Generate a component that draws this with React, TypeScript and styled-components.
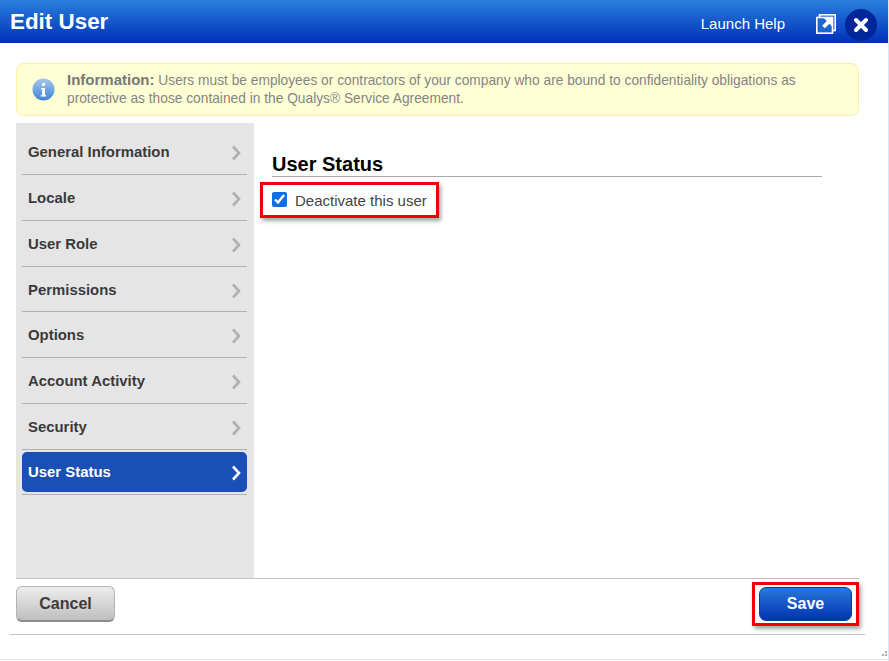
import React from "react";
import styled, { createGlobalStyle } from "styled-components";

const Global = createGlobalStyle`
  html, body { margin: 0; padding: 0; background: #fff; }
  body { font-family: "Liberation Sans", Arial, sans-serif; }
`;

const Page = styled.div`
  width: 889px;
  height: 661px;
  display: flex;
  flex-direction: column;
  overflow: hidden;
  position: relative;
  background: #fff;
  box-sizing: border-box;
  border-right: 1px solid #d6e6f7;
`;

const Header = styled.header`
  height: 43px;
  flex: none;
  box-sizing: border-box;
  display: flex;
  align-items: flex-start;
  padding: 9px 11px 0 10px;
  color: #fff;
  background: linear-gradient(#2a7fdc, #0032ba);
  border-bottom: 1px solid #0030b0;
`;

const Title = styled.h1`
  margin: 0;
  font-size: 22.4px;
  font-weight: 700;
  flex: 1;
`;

const HelpLink = styled.span`
  font-size: 15px;
  margin: 6px 31px 0 0;
`;

const PopoutIcon = styled.svg`
  margin-top: 5px;
  flex: none;
`;

const CloseButton = styled.span`
  width: 32px;
  height: 32px;
  border-radius: 50%;
  background: #00269a;
  display: flex;
  align-items: center;
  justify-content: center;
  margin-left: 9px;
`;

const Body = styled.div`
  flex: none;
  display: flex;
  flex-direction: column;
  padding: 20px 29px 0 16px;
`;

const Info = styled.div`
  height: 53px;
  flex: none;
  box-sizing: border-box;
  display: flex;
  align-items: center;
  background: #ffffd6;
  border: 1px solid #fdeea2;
  border-radius: 8px;
  padding: 0 40px 0 15px;
  color: #848484;
  font-size: 13.75px;
  line-height: 18px;
  gap: 12px;
`;

const InfoIcon = styled.svg`
  flex: none;
`;

const InfoText = styled.p`
  margin: 0;
  b { font-weight: 700; font-size: 15px; color: #777; }
`;

const Columns = styled.div`
  flex: none;
  height: 455px;
  margin-top: 7px;
  display: flex;
`;

const Sidebar = styled.nav`
  width: 238px;
  flex: none;
  box-sizing: border-box;
  background: #e5e5e5;
  padding: 6.5px 7px 0 6px;
  height: 455px;
`;

const NavItem = styled.div<{ $active?: boolean }>`
  height: 45.72px;
  box-sizing: border-box;
  border-bottom: 1px solid #b1b1b1;
  display: flex;
  align-items: stretch;
  padding: ${(p) => (p.$active ? "2px 0" : "0 0 1px")};
`;

const NavInner = styled.div<{ $active?: boolean }>`
  flex: 1;
  display: flex;
  align-items: center;
  justify-content: space-between;
  box-sizing: border-box;
  padding: ${(p) => (p.$active ? "0 6px 0 6px" : "2px 6px 0 6px")};
  font-size: 14.9px;
  font-weight: 700;
  color: ${(p) => (p.$active ? "#fff" : "#3a3a3a")};
  background: ${(p) => (p.$active ? "#1a4fb5" : "transparent")};
  border-radius: ${(p) => (p.$active ? "5px" : "0")};
`;

const Chevron = styled.svg`
  margin-top: 2px;
  flex: none;
`;

const Content = styled.section`
  flex: 1;
  padding: 29px 7px 0 18px;
`;

const SectionTitle = styled.h2`
  margin: 0;
  height: 24px;
  font-size: 20px;
  line-height: 25px;
  font-weight: 700;
  color: #000;
  border-bottom: 1px solid #a8a8a8;
  width: 550px;
`;

const Marked = styled.div`
  box-sizing: border-box;
  border: 3px solid #f00000;
  box-shadow: 2px 3px 4px rgba(0, 0, 0, 0.35);
  background: #fff;
`;

const CheckMark = styled(Marked)`
  display: flex;
  align-items: center;
  height: 36px;
  width: 179px;
  margin: 5px 0 0 -12px;
  padding: 0 0 0 9px;
  gap: 8px;
  font-size: 15px;
  color: #444;
`;

const Box = styled.input`
  width: 15px;
  height: 15px;
  margin: -1px 0 0;
  accent-color: #0b6fe8;
`;

const Footer = styled.footer`
  flex: none;
  height: 56px;
  box-sizing: border-box;
  border-top: 1px solid #c4c4c4;
  display: flex;
  align-items: flex-start;
  justify-content: space-between;
`;

const Cancel = styled.button`
  width: 99px;
  height: 36px;
  box-sizing: border-box;
  margin-top: 7px;
  border: 1px solid #b4b4b4;
  border-bottom: 2px solid #8c8c8c;
  border-radius: 6px;
  background: linear-gradient(#ededed, #bfbfbf);
  color: #3c3c3c;
  font: 700 16px "Liberation Sans", Arial, sans-serif;
`;

const SaveMark = styled(Marked)`
  width: 107px;
  height: 44px;
  margin-top: 3px;
  display: flex;
  align-items: center;
  justify-content: center;
`;

const Save = styled.button`
  width: 93px;
  height: 34px;
  border: 1px solid #0d3a99;
  border-radius: 7px;
  background: linear-gradient(#2a79d8, #0033b4);
  color: #fff;
  font: 700 16px "Liberation Sans", Arial, sans-serif;
`;

const BottomRule = styled.div`
  height: 1px;
  flex: none;
  background: #c4c4c4;
  margin: 0 23px 0 10px;
`;

const BottomSpace = styled.div`
  height: 25px;
  flex: none;
  border-bottom: 1px solid #e6e6e6;
  position: relative;
  box-sizing: border-box;
`;

const Grip = styled.svg`
  position: absolute;
  right: 0;
  bottom: -1px;
`;

const items = ["General Information", "Locale", "User Role", "Permissions", "Options", "Account Activity", "Security", "User Status"];

export default function App() {
  return (
    <Page>
      <Global />
      <Header>
        <Title>Edit User</Title>
        <HelpLink>Launch Help</HelpLink>
        <PopoutIcon width="20" height="20" viewBox="0 0 20 20">
          <rect x="3.5" y="0.8" width="15.7" height="15.7" fill="#1e66cf" stroke="#fff" strokeWidth="1.6" />
          <rect x="0.8" y="3.5" width="15.7" height="15.7" fill="#1e66cf" stroke="#fff" strokeWidth="1.6" />
          <path d="M7.5 3.8h8.7v8.7l-2.8-2.8-4.6 4.6-2.6-2.6 4.6-4.6z" fill="#fff" />
        </PopoutIcon>
        <CloseButton>
          <svg width="16" height="16" viewBox="0 0 16 16">
            <path d="M3 3l10 10M13 3L3 13" stroke="#fff" strokeWidth="4" strokeLinecap="round" />
          </svg>
        </CloseButton>
      </Header>
      <Body>
        <Info>
          <InfoIcon width="23" height="23" viewBox="0 0 23 23">
            <defs>
              <linearGradient id="ig" x1="0" y1="0" x2="0" y2="1">
                <stop offset="0" stopColor="#a5c8ec" />
                <stop offset="1" stopColor="#3e84d6" />
              </linearGradient>
            </defs>
            <circle cx="11.5" cy="11.5" r="11" fill="url(#ig)" />
            <circle cx="11.5" cy="6.5" r="1.8" fill="#fff" />
            <path d="M9 10h4v7h1.2v1.6H8.8V17H10v-5.4H9z" fill="#fff" />
          </InfoIcon>
          <InfoText>
            <b>Information:</b> Users must be employees or contractors of your company who are bound to confidentiality obligations as protective as those contained in the Qualys® Service Agreement.
          </InfoText>
        </Info>
        <Columns>
          <Sidebar>
            {items.map((t, i) => {
              const active = i === items.length - 1;
              return (
                <NavItem key={t} $active={active}>
                  <NavInner $active={active}>
                    {t}
                    <Chevron width="10" height="16" viewBox="0 0 10 16">
                      <path d="M2 1.5L8 8l-6 6.5" fill="none" stroke={active ? "#fff" : "#b0b0b0"} strokeWidth="2.6" />
                    </Chevron>
                  </NavInner>
                </NavItem>
              );
            })}
          </Sidebar>
          <Content>
            <SectionTitle>User Status</SectionTitle>
            <CheckMark>
              <Box type="checkbox" defaultChecked />
              Deactivate this user
            </CheckMark>
          </Content>
        </Columns>
        <Footer>
          <Cancel>Cancel</Cancel>
          <SaveMark>
            <Save>Save</Save>
          </SaveMark>
        </Footer>
      </Body>
      <BottomRule />
      <BottomSpace>
        <Grip width="10" height="10" viewBox="0 0 10 10">
          <g fill="#aaa">
            <rect x="7" y="1" width="2" height="2" />
            <rect x="4" y="4" width="2" height="2" />
            <rect x="7" y="4" width="2" height="2" />
          </g>
        </Grip>
      </BottomSpace>
    </Page>
  );
}
